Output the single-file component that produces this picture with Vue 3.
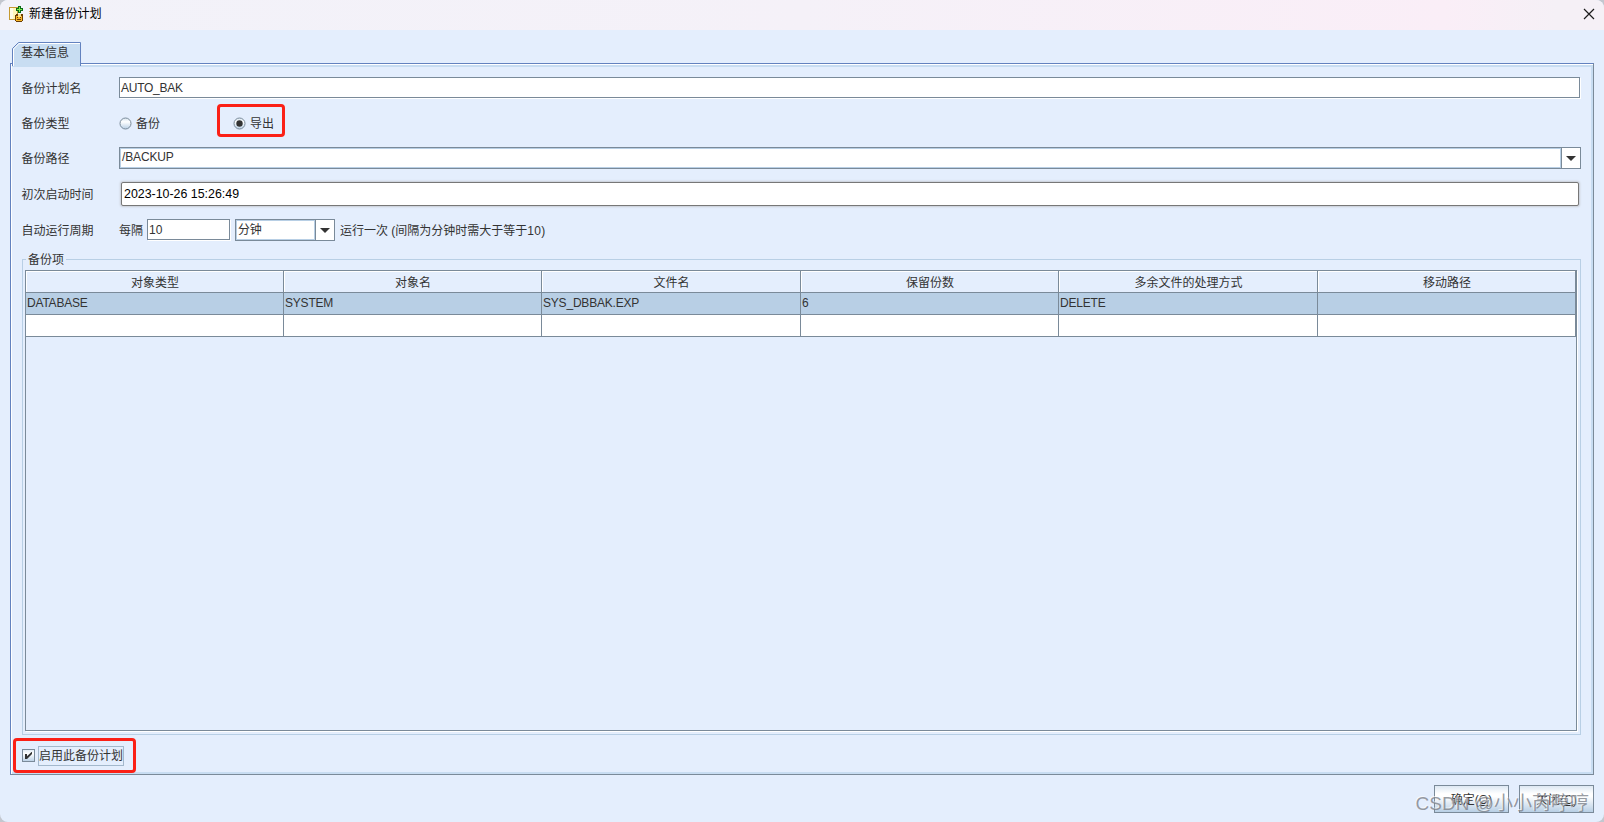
<template>
  <div class="dialog">
    <header class="title-bar">
      <svg class="title-icon" width="15" height="17" viewBox="0 0 15 17" shape-rendering="crispEdges">
        <rect x="0.5" y="1.5" width="8" height="12" fill="#fff6b8" stroke="#c59a32" />
        <rect x="1" y="2" width="3" height="11" fill="#fffce6" />
        <path d="M9 0h3v2h2v3h-2v2h-3v-2h-2v-3h2z" fill="#0b6b16" />
        <path d="M10 1h1v2h2v1h-2v2h-1v-2h-2v-1h2z" fill="#7cf04c" />
        <path d="M6 9h1v-1h2v1h3v-1h2v7h-1v1h-6v-1h-1z" fill="#6b3d05" />
        <path d="M7 10h6v5h-6z" fill="#f8b72b" />
        <path d="M9 8h3v3h-3z" fill="#fbe391" />
        <path d="M8 11h1v1h-1zM11 11h1v1h-1zM8 13h4v1h-4z" fill="#6b3d05" />
      </svg>
      <h1 class="title">新建备份计划</h1>
      <svg class="close" width="12" height="12" viewBox="0 0 12 12">
        <path d="M1 1L11 11M11 1L1 11" stroke="#1b1b1b" stroke-width="1.2" />
      </svg>
    </header>

    <div class="tabs">
      <svg class="tab-shape" width="70" height="24" viewBox="0 0 70 24">
        <path d="M0.5 24V6.5L6.5 0.5H68.5V24" fill="#c8ddf2" stroke="#6382bf" />
        <path d="M1.5 24V7L7 1.5H68" fill="none" stroke="#fff" />
      </svg>
      <span class="tab-text">基本信息</span>
    </div>

    <main class="panel">
      <div class="row row-name">
        <label class="label">备份计划名</label>
        <div class="input name-input">AUTO_BAK</div>
      </div>

      <div class="row row-type">
        <label class="label">备份类型</label>
        <span v-for="type in types" :key="type.text" class="radio" :class="{ marked: type.checked }">
          <svg width="13" height="13" viewBox="0 0 13 13">
            <defs>
              <linearGradient id="radio-fill" x1="0" y1="0" x2="0" y2="1">
                <stop offset="0" stop-color="#d5e3ef" />
                <stop offset="0.35" stop-color="#ffffff" />
                <stop offset="1" stop-color="#b8cfe5" />
              </linearGradient>
            </defs>
            <circle cx="6.5" cy="6.5" r="5.5" fill="url(#radio-fill)" stroke="#7a8a99" />
            <circle v-if="type.checked" cx="6.5" cy="6.5" r="3.2" fill="#333" />
          </svg>
          {{ type.text }}
        </span>
      </div>

      <div class="row row-path">
        <label class="label">备份路径</label>
        <div class="combo">
          <span class="combo-value">/BACKUP</span>
          <span class="combo-button"><i class="arrow"></i></span>
        </div>
      </div>

      <div class="row row-time">
        <label class="label">初次启动时间</label>
        <div class="time-input">2023-10-26 15:26:49</div>
      </div>

      <div class="row row-period">
        <label class="label">自动运行周期</label>
        <span class="every">每隔</span>
        <div class="input period-input">10</div>
        <div class="combo unit-combo">
          <span class="combo-value">分钟</span>
          <span class="combo-button"><i class="arrow"></i></span>
        </div>
        <span class="hint">运行一次 (间隔为分钟时需大于等于<span class="limit">10)</span></span>
      </div>

      <section class="group">
        <span class="legend">备份项</span>
        <div class="table-view">
          <table class="table">
            <thead>
              <tr>
                <th v-for="column in columns" :key="column">{{ column }}</th>
              </tr>
            </thead>
            <tbody>
              <tr v-for="(item, index) in items" :key="index" :class="{ selected: index === 0 }">
                <td v-for="(cell, i) in item" :key="i">{{ cell }}</td>
              </tr>
            </tbody>
          </table>
        </div>
      </section>

      <div class="enable">
        <svg width="13" height="13" viewBox="0 0 13 13">
          <defs>
            <linearGradient id="check-fill" x1="0" y1="0" x2="0" y2="1">
              <stop offset="0" stop-color="#dfe9f3" />
              <stop offset="0.35" stop-color="#ffffff" />
              <stop offset="1" stop-color="#b8cfe5" />
            </linearGradient>
          </defs>
          <rect x="0.5" y="0.5" width="12" height="12" fill="url(#check-fill)" stroke="#7a8a99" />
          <path d="M3 5h2v2.2L9.5 3H10v2L5 10H3z" fill="#333" />
        </svg>
        <span class="enable-text">启用此备份计划</span>
      </div>
    </main>

    <footer class="actions">
      <button class="button">确定(<u>O</u>)</button>
      <button class="button">关闭(<u>C</u>)</button>
    </footer>
    <div class="watermark">CSDN @小小芮哼哼</div>
  </div>
</template>

<script setup>
const types = [
  { text: '备份', checked: false },
  { text: '导出', checked: true },
];

const columns = ['对象类型', '对象名', '文件名', '保留份数', '多余文件的处理方式', '移动路径'];

const items = [
  ['DATABASE', 'SYSTEM', 'SYS_DBBAK.EXP', '6', 'DELETE', ''],
  ['', '', '', '', '', ''],
];
</script>

<style>
body {
  margin: 0;
  background: #c3c7cf;
}
</style>

<style scoped>
.dialog {
  position: relative;
  display: flex;
  flex-direction: column;
  box-sizing: border-box;
  width: 1604px;
  height: 822px;
  overflow: hidden;
  border-radius: 8px;
  background: #e4eefd;
  color: #333;
  font: 12px/16px 'Liberation Sans', 'Noto Sans CJK SC', sans-serif;
  white-space: nowrap;
}

.dialog * {
  box-sizing: border-box;
}

.title-bar {
  display: flex;
  align-items: center;
  height: 30px;
  padding: 0 9px 2px 9px;
  background: linear-gradient(90deg, #f2f2f9, #f5f1f8 50%, #faeef7 90%, #f5f0f6 97%);
}

.title {
  flex: 1;
  margin: 0 0 0 5px;
  color: #000;
  font-size: 12.1px;
  font-weight: 400;
}

.close {
  margin-top: 0;
}

.tabs {
  position: relative;
  z-index: 1;
  height: 24px;
  margin: 12px 0 -3px 12px;
}

.tab-shape {
  display: block;
}

.tab-text {
  position: absolute;
  left: 9px;
  top: 3px;
}

.panel {
  display: flex;
  flex-direction: column;
  height: 712px;
  margin: 0 10px;
  padding: 13px 12px 0 11px;
  border: 1px solid #7a8a99;
  border-top-color: #6382bf;
  border-left-color: #6382bf;
  box-shadow:
    inset 0 1px #fff,
    inset 1px 0 #fff,
    inset 0 3px #c8ddf2,
    inset -2px -2px #c8ddf2;
}

.row {
  display: flex;
  align-items: center;
}

.label {
  width: 97.5px;
  margin-left: -0.5px;
  padding-top: 2px;
}

.input {
  flex: 1;
  height: 21px;
  margin-right: 1px;
  padding-left: 1px;
  border: 1px solid #7a8a99;
  background: #fff;
  box-shadow: 1px 1px #fff;
  line-height: 20px;
}

.name-input {
  letter-spacing: -0.25px;
}

.row-name {
  height: 21px;
}

.row-type {
  height: 33px;
  margin-top: 9px;
}

.row-type .label {
  padding-top: 0;
}

.radio {
  position: relative;
  display: flex;
  align-items: center;
  gap: 4px;
  height: 33px;
}

.radio.marked {
  margin-left: 73px;
}

/* highlight frame around the chosen type */
.radio.marked::before {
  content: '';
  position: absolute;
  left: -16px;
  top: -3px;
  box-sizing: border-box;
  width: 68px;
  height: 33px;
  border: 3px solid #fb2016;
  border-radius: 4px;
}

.row-path {
  height: 22px;
  margin-top: 7px;
}

.combo {
  display: flex;
  flex: 1;
  height: 22px;
  border: 1px solid #7a8a99;
  background: #fff;
}

.combo-value {
  flex: 1;
  padding-left: 1px;
  border: 1px solid #b8cfe5;
  letter-spacing: -0.15px;
  line-height: 17px;
}

.combo-button {
  display: flex;
  align-items: center;
  justify-content: center;
  width: 19px;
  border-left: 1px solid #7a8a99;
}

.arrow {
  width: 10px;
  height: 5px;
  margin-top: 1px;
  background: #333;
  clip-path: polygon(0 0, 100% 0, 50% 100%);
}

.row-time {
  height: 24px;
  margin-top: 13px;
}

.time-input {
  flex: 1;
  height: 24px;
  margin: 0 2px;
  padding-left: 2px;
  border: 1px solid #777;
  border-radius: 2px;
  background: #fff;
  box-shadow: 0 0 2px 1px #c8ccd4;
  color: #000;
  font-size: 12.4px;
  line-height: 22px;
}

.row-period {
  height: 22px;
  margin-top: 13px;
}

.every {
  width: 28px;
  padding-top: 2px;
}

.period-input {
  flex: none;
  width: 83px;
  margin: 0 5px 1px 0;
}

.unit-combo {
  flex: none;
  width: 100px;
  margin-right: 5px;
}

.unit-combo .combo-value {
  line-height: 19px;
}

.hint {
  padding-top: 2px;
}

.limit {
  letter-spacing: 0.3px;
}

.group {
  position: relative;
  height: 476px;
  margin-top: 18px;
  padding: 10px 3px 0 2px;
  border: 1px solid #b8cfe5;
}

.legend {
  position: absolute;
  left: 3px;
  top: -8px;
  padding: 0 2px;
  background: #e4eefd;
}

.table-view {
  height: 461px;
  border: 1px solid #7a8a99;
  box-shadow: 1px 1px #fff;
}

.table {
  width: 1550px;
  border-spacing: 0;
  table-layout: fixed;
}

.table th,
.table td {
  width: 258px;
  height: 22px;
  padding: 0 0 0 1px;
  border-right: 1px solid #7a8a99;
  border-bottom: 1px solid #7a8a99;
  background: #fff;
  font-weight: 400;
  line-height: 20px;
  text-align: left;
}

.table th:nth-child(3),
.table th:nth-child(5) {
  width: 259px;
}

.table th {
  padding-top: 3px;
  background: #e4eefd;
  box-shadow: inset 1px 1px #fff;
  line-height: 18px;
  text-align: center;
}

.table td {
  padding-bottom: 2px;
  letter-spacing: -0.2px;
  line-height: 18px;
}

.table .selected td {
  background: #b8cfe5;
}

.enable {
  display: flex;
  align-items: center;
  gap: 3px;
  width: 123px;
  height: 35px;
  margin: 3px 0 0 -9px;
  padding-left: 6px;
  border: 3px solid #fb2016;
  border-radius: 4px;
}

.enable-text {
  width: 86px;
  height: 20px;
  border: 1px solid #a3b8cc;
  line-height: 18px;
}

.actions {
  display: flex;
  justify-content: flex-end;
  gap: 10px;
  margin: 10px 10px 0 0;
}

.button {
  width: 75px;
  height: 28px;
  padding: 1px 0 0;
  border: 1px solid #7a8a99;
  background: linear-gradient(#dde8f3, #fff 30%, #fff 40%, #b8cfe5);
  color: #333;
  font: inherit;
}

.watermark {
  position: absolute;
  right: 15px;
  bottom: 6px;
  color: rgba(125, 130, 138, 0.8);
  font-size: 19px;
  line-height: 24px;
  text-shadow: -1px -1px rgba(255, 255, 255, 0.6);
}
</style>
